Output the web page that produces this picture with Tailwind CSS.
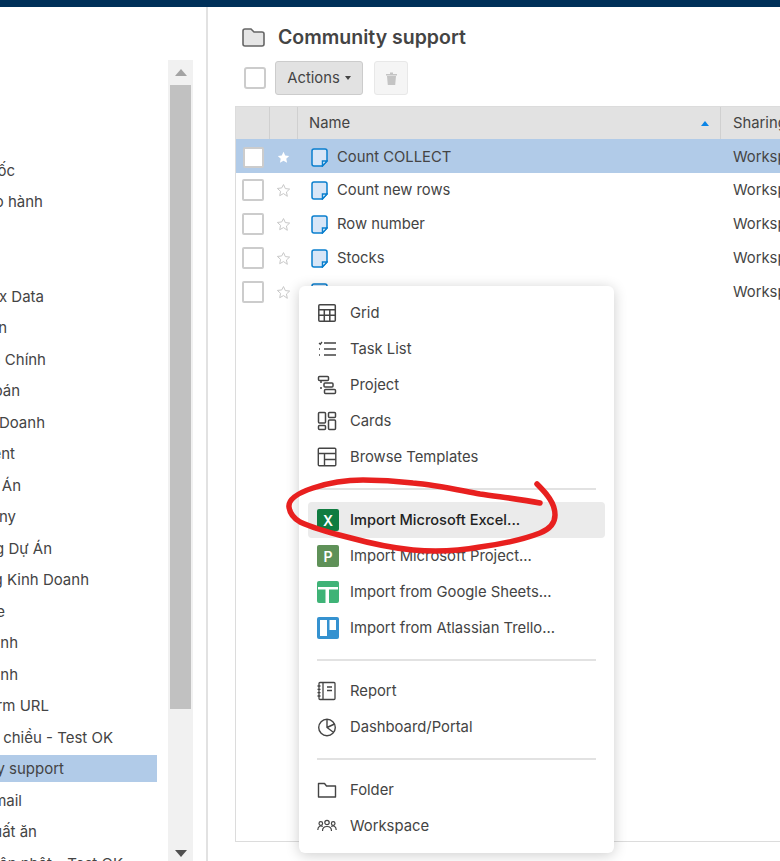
<!DOCTYPE html>
<html lang="en">
<head>
<meta charset="UTF-8">
<title>Community support</title>
<script src="https://cdn.jsdelivr.net/npm/@tailwindcss/browser@4"></script>
</head>
<body class="bg-white overflow-hidden font-['Inter',sans-serif] text-[14.8px] leading-[23px] text-[#444]">
<div class="relative w-[780px] h-[861px] overflow-hidden">
  <div class="h-[7px] bg-[#003059]"></div>
  <div class="flex h-[854px]">
    <!-- sidebar: names are cut off by the left edge, so each row is end-aligned -->
    <div class="w-[208px] shrink-0 border-r-2 border-[#e2e2e2] flex pt-[53px]">
      <div class="w-[157px] shrink-0 pt-[94.5px] overflow-hidden text-[15px]">
        <div class="h-[31.5px] flex items-center justify-end whitespace-nowrap w-[15px]">ốc</div>
        <div class="h-[31.5px] flex items-center justify-end whitespace-nowrap w-[43px]">o hành</div>
        <div class="h-[31.5px]"></div>
        <div class="h-[31.5px]"></div>
        <div class="h-[31.5px] flex items-center justify-end whitespace-nowrap w-[44px]">x Data</div>
        <div class="h-[31.5px] flex items-center justify-end whitespace-nowrap w-[7px]">n</div>
        <div class="h-[31.5px] flex items-center justify-end whitespace-nowrap w-[46px]">n Chính</div>
        <div class="h-[31.5px] flex items-center justify-end whitespace-nowrap w-[20px]">bán</div>
        <div class="h-[31.5px] flex items-center justify-end whitespace-nowrap w-[45px]">Doanh</div>
        <div class="h-[31.5px] flex items-center justify-end whitespace-nowrap w-[15px]">ent</div>
        <div class="h-[31.5px] flex items-center justify-end whitespace-nowrap w-[21px]">Án</div>
        <div class="h-[31.5px] flex items-center justify-end whitespace-nowrap w-[16px]">ny</div>
        <div class="h-[31.5px] flex items-center justify-end whitespace-nowrap w-[52px]">g Dự Án</div>
        <div class="h-[31.5px] flex items-center justify-end whitespace-nowrap w-[89px]">g Kinh Doanh</div>
        <div class="h-[31.5px] flex items-center justify-end whitespace-nowrap w-[5px]">e</div>
        <div class="h-[31.5px] flex items-center justify-end whitespace-nowrap w-[18px]">anh</div>
        <div class="h-[31.5px] flex items-center justify-end whitespace-nowrap w-[18px]">nh</div>
        <div class="h-[31.5px] flex items-center justify-end whitespace-nowrap w-[49px]">rm URL</div>
        <div class="h-[31.5px] flex items-center justify-end whitespace-nowrap w-[113px]">t chiều - Test OK</div>
        <div class="h-[31.5px] flex items-center"><div class="w-full h-[27px] flex items-center bg-[#b1cbe8]"><div class="w-[64px] flex justify-end whitespace-nowrap">y support</div></div></div>
        <div class="h-[31.5px] flex items-center justify-end whitespace-nowrap w-[22px]">mail</div>
        <div class="h-[31.5px] flex items-center justify-end whitespace-nowrap w-[37px]">uất ăn</div>
        <div class="h-[31.5px] flex items-center justify-end whitespace-nowrap w-[123px]">ận nhật - Test OK</div>
      </div>
      <!-- scrollbar -->
      <div class="ml-[11px] w-[25px] bg-[#f1f1f1] flex flex-col items-center">
        <div class="h-[25px] w-full flex items-center justify-center">
          <svg width="12" height="7" viewBox="0 0 12 7"><path d="M6 0 12 7H0z" fill="#a3a3a3"/></svg>
        </div>
        <div class="w-[21px] h-[624px] bg-[#c1c1c1]"></div>
        <div class="mt-[138px] h-[12px] w-full flex items-center justify-center">
          <svg width="12" height="7" viewBox="0 0 12 7"><path d="M0 0H12L6 7z" fill="#505050"/></svg>
        </div>
      </div>
    </div>
    <!-- main -->
    <div class="flex-1 min-w-0 pl-[27px]">
      <div class="flex items-center h-[47px] pl-[7px] gap-[13px] pt-[14px]">
        <svg width="23" height="19" viewBox="0 0 23 19"><path d="M1 3q0-2 2-2h6l3 3h8q2 0 2 2v10q0 2-2 2H3q-2 0-2-2z" fill="#e6e6e6" stroke="#666" stroke-width="1.6"/></svg>
        <h1 class="text-[19.5px] font-semibold text-[#444]">Community support</h1>
      </div>
      <div class="flex items-center h-[34px] mt-[7px]">
        <div class="ml-[9px] w-[22px] h-[22px] border-2 border-[#ccc] rounded-[3px] bg-white"></div>
        <div class="ml-[9px] w-[88px] h-[34px] bg-[#e2e2e2] border border-[#ccc] rounded-[3px] flex items-center justify-center gap-[5px]">
          <span>Actions</span>
          <svg width="6" height="4" viewBox="0 0 6 4"><path d="M0 0H6L3 4z" fill="#444"/></svg>
        </div>
        <div class="ml-[11px] w-[34px] h-[34px] bg-[#f5f5f5] border border-[#e8e8e8] rounded-[3px] flex items-center justify-center">
          <svg width="11" height="13" viewBox="0 0 11 13"><path d="M0 2h11v1.500H0zM4 .5h3V2H4zM1 4h9l-.8 9H1.800z" fill="#c4c4c4"/></svg>
        </div>
      </div>
      <!-- table -->
      <div class="mt-[11px] h-[736px] border border-[#dcdcdc] border-r-0 overflow-hidden">
        <div class="flex h-[33px] bg-[#e2e2e2] border-b border-[#d4d4d4]">
          <div class="w-[34px] shrink-0 border-r border-[#d0d0d0]"></div>
          <div class="w-[28px] shrink-0 border-r border-[#d0d0d0]"></div>
          <div class="w-[423px] shrink-0 border-r border-[#d0d0d0] pl-[11px] pr-[11px] flex items-center justify-between">
            <span>Name</span>
            <svg width="8" height="5" viewBox="0 0 8 5"><path d="M4 0 8 5H0z" fill="#0a84e6"/></svg>
          </div>
          <div class="pl-[12px] flex items-center whitespace-nowrap">Sharing</div>
        </div>
        <!-- selected row -->
        <div class="flex h-[34px] -mt-[1px] pt-[2px] items-center bg-[#b1cbe8]">
          <div class="w-[34px] shrink-0 flex justify-center"><div class="w-[21px] h-[21px] border-2 border-[#ccc] rounded-[2px] bg-white"></div></div>
          <div class="w-[28px] shrink-0 flex justify-center pr-[2px]"><svg width="13" height="13" viewBox="0 0 24 24"><path d="M12 1.500l3.200 7 7.300.8-5.400 5 1.500 7.500L12 18l-6.600 3.800 1.500-7.500-5.400-5 7.300-.8z" fill="#fff"/></svg></div>
          <div class="w-[423px] shrink-0 pl-[13px] flex items-center gap-[9px]">
            <svg class="shrink-0" width="17" height="19" viewBox="0 0 17 19"><path d="M3 1h11q2 0 2 2v10l-5 5H3q-2 0-2-2V3q0-2 2-2z" fill="#d8e6f7" stroke="#0a7fce" stroke-width="1.500"/><path d="M16 13h-4.500v5z" fill="#fff" stroke="#0a7fce" stroke-width="1.500"/></svg>
            <span>Count COLLECT</span>
          </div>
          <div class="pl-[12px] whitespace-nowrap">Workspace</div>
        </div>
        <div class="flex h-[34px] items-center">
          <div class="w-[34px] shrink-0 flex justify-center"><div class="w-[22px] h-[22px] border-2 border-[#ccc] rounded-[2px] bg-white"></div></div>
          <div class="w-[28px] shrink-0 flex justify-center pr-[2px]"><svg width="15" height="15" viewBox="0 0 24 24"><path d="M12 2.500l2.900 6.400 6.900.8-5.100 4.700 1.400 6.900L12 16.900l-6.100 3.400 1.400-6.900-5.100-4.700 6.900-.8z" fill="none" stroke="#c8c8c8" stroke-width="1.600"/></svg></div>
          <div class="w-[423px] shrink-0 pl-[13px] flex items-center gap-[9px]">
            <svg class="shrink-0" width="17" height="19" viewBox="0 0 17 19"><path d="M3 1h11q2 0 2 2v10l-5 5H3q-2 0-2-2V3q0-2 2-2z" fill="#d8e6f7" stroke="#0a7fce" stroke-width="1.500"/><path d="M16 13h-4.500v5z" fill="#fff" stroke="#0a7fce" stroke-width="1.500"/></svg>
            <span>Count new rows</span>
          </div>
          <div class="pl-[12px] whitespace-nowrap">Workspace</div>
        </div>
        <div class="flex h-[34px] items-center">
          <div class="w-[34px] shrink-0 flex justify-center"><div class="w-[22px] h-[22px] border-2 border-[#ccc] rounded-[2px] bg-white"></div></div>
          <div class="w-[28px] shrink-0 flex justify-center pr-[2px]"><svg width="15" height="15" viewBox="0 0 24 24"><path d="M12 2.500l2.900 6.400 6.900.8-5.100 4.700 1.400 6.900L12 16.900l-6.100 3.400 1.400-6.900-5.100-4.700 6.900-.8z" fill="none" stroke="#c8c8c8" stroke-width="1.600"/></svg></div>
          <div class="w-[423px] shrink-0 pl-[13px] flex items-center gap-[9px]">
            <svg class="shrink-0" width="17" height="19" viewBox="0 0 17 19"><path d="M3 1h11q2 0 2 2v10l-5 5H3q-2 0-2-2V3q0-2 2-2z" fill="#d8e6f7" stroke="#0a7fce" stroke-width="1.500"/><path d="M16 13h-4.500v5z" fill="#fff" stroke="#0a7fce" stroke-width="1.500"/></svg>
            <span>Row number</span>
          </div>
          <div class="pl-[12px] whitespace-nowrap">Workspace</div>
        </div>
        <div class="flex h-[34px] items-center">
          <div class="w-[34px] shrink-0 flex justify-center"><div class="w-[22px] h-[22px] border-2 border-[#ccc] rounded-[2px] bg-white"></div></div>
          <div class="w-[28px] shrink-0 flex justify-center pr-[2px]"><svg width="15" height="15" viewBox="0 0 24 24"><path d="M12 2.500l2.900 6.400 6.900.8-5.100 4.700 1.400 6.900L12 16.900l-6.100 3.400 1.400-6.900-5.100-4.700 6.900-.8z" fill="none" stroke="#c8c8c8" stroke-width="1.600"/></svg></div>
          <div class="w-[423px] shrink-0 pl-[13px] flex items-center gap-[9px]">
            <svg class="shrink-0" width="17" height="19" viewBox="0 0 17 19"><path d="M3 1h11q2 0 2 2v10l-5 5H3q-2 0-2-2V3q0-2 2-2z" fill="#d8e6f7" stroke="#0a7fce" stroke-width="1.500"/><path d="M16 13h-4.500v5z" fill="#fff" stroke="#0a7fce" stroke-width="1.500"/></svg>
            <span>Stocks</span>
          </div>
          <div class="pl-[12px] whitespace-nowrap">Workspace</div>
        </div>
        <div class="flex h-[34px] items-center">
          <div class="w-[34px] shrink-0 flex justify-center"><div class="w-[22px] h-[22px] border-2 border-[#ccc] rounded-[2px] bg-white"></div></div>
          <div class="w-[28px] shrink-0 flex justify-center pr-[2px]"><svg width="15" height="15" viewBox="0 0 24 24"><path d="M12 2.500l2.900 6.400 6.900.8-5.100 4.700 1.400 6.900L12 16.900l-6.100 3.400 1.400-6.900-5.100-4.700 6.900-.8z" fill="none" stroke="#c8c8c8" stroke-width="1.600"/></svg></div>
          <div class="w-[423px] shrink-0 pl-[13px] flex items-center gap-[9px]">
            <svg class="shrink-0" width="17" height="19" viewBox="0 0 17 19"><path d="M3 1h11q2 0 2 2v10l-5 5H3q-2 0-2-2V3q0-2 2-2z" fill="#d8e6f7" stroke="#0a7fce" stroke-width="1.500"/></svg>
          </div>
          <div class="pl-[12px] whitespace-nowrap">Workspace</div>
        </div>
      </div>
    </div>
  </div>

  <!-- new item menu -->
  <div class="absolute left-[299px] top-[286px] w-[315px] h-[567px] bg-white rounded-[6px] shadow-[0_2px_14px_rgba(0,0,0,0.2)] pt-[9px] px-[9px]">
    <div class="h-9 flex items-center pl-[9px] gap-[13px]"><svg width="20" height="20" viewBox="0 0 20 20" fill="none" stroke="#444" stroke-width="1.500"><rect x="1.800" y="1.800" width="16.500" height="16.500" rx="1"/><path d="M1.800 6.800h16.500M1.800 12.300h16.500M7.300 6.800v11.500M12.800 6.800v11.500"/></svg><span>Grid</span></div>
    <div class="h-9 flex items-center pl-[9px] gap-[13px]"><svg width="20" height="20" viewBox="0 0 20 20" fill="none" stroke="#444" stroke-width="1.300"><path d="M7 4h12M7 10h12M7 16h12"/><path d="m2 4 1.300 1.200L5 3M2 10h1M2 16h1"/></svg><span>Task List</span></div>
    <div class="h-9 flex items-center pl-[9px] gap-[13px]"><svg width="20" height="20" viewBox="0 0 20 20" fill="none" stroke="#444" stroke-width="1.500"><rect x="1.500" y="1.500" width="10" height="4" rx="1"/><rect x="7" y="8" width="9" height="4" rx="1"/><rect x="7.500" y="14.500" width="11" height="4" rx="1"/><path d="M4 5.500V8M4 12V14"/></svg><span>Project</span></div>
    <div class="h-9 flex items-center pl-[9px] gap-[13px]"><svg width="20" height="20" viewBox="0 0 20 20" fill="none" stroke="#444" stroke-width="1.500"><rect x="1.500" y="1.500" width="7" height="10.500" rx="1"/><rect x="11.500" y="1.500" width="7" height="5" rx="1"/><rect x="1.500" y="14.500" width="7" height="4" rx="1"/><rect x="11.500" y="9" width="7" height="9.500" rx="1"/></svg><span>Cards</span></div>
    <div class="h-9 flex items-center pl-[9px] gap-[13px]"><svg width="20" height="20" viewBox="0 0 20 20" fill="none" stroke="#444" stroke-width="1.400"><rect x="1.300" y="1.300" width="17.500" height="17.500" rx="1"/><path d="M1.300 6.500h17.500M7.500 6.500v12.300M7.500 12.500h11.300"/></svg><span>Browse Templates</span></div>
    <div class="h-[2px] mt-[13px] mx-[9px] bg-[#e2e2e2]"></div>
    <div class="mt-[12px] h-9 flex items-center pl-[9px] gap-[11px] bg-[#ebebeb] rounded-[4px] text-[#222] text-[14.6px] font-medium">
      <div class="w-[22px] h-[22px] rounded-[2px] bg-[#107c41] flex items-center justify-center text-white text-[14px] font-semibold">X</div><span>Import Microsoft Excel...</span>
    </div>
    <div class="h-9 flex items-center pl-[9px] gap-[11px]">
      <div class="w-[22px] h-[22px] rounded-[2px] bg-[#5f9158] flex items-center justify-center text-white text-[14px] font-semibold">P</div><span>Import Microsoft Project...</span>
    </div>
    <div class="h-9 flex items-center pl-[9px] gap-[11px]">
      <svg width="22" height="22" viewBox="0 0 22 22"><rect width="22" height="22" rx="2" fill="#3fb377"/><path d="M1 6h20v2.500h-9V22H8.500V8.500H1z" fill="#fff"/></svg><span>Import from Google Sheets...</span>
    </div>
    <div class="h-9 flex items-center pl-[9px] gap-[11px]">
      <svg width="22" height="22" viewBox="0 0 22 22"><rect width="22" height="22" rx="2" fill="#3592d0"/><rect x="3" y="3" width="7" height="16" fill="#fff"/><rect x="12.500" y="3" width="6.500" height="10" fill="#fff"/></svg><span>Import from Atlassian Trello...</span>
    </div>
    <div class="h-[2px] mt-[13px] mx-[9px] bg-[#e2e2e2]"></div>
    <div class="mt-[12px] h-9 flex items-center pl-[9px] gap-[13px]"><svg width="20" height="20" viewBox="0 0 20 20" fill="none" stroke="#444" stroke-width="1.300"><rect x="2" y="1.500" width="16" height="17" rx="1"/><path d="M6 1.500v17M.5 5h3M.5 8.300h3M.5 11.600h3M.5 15h3M10 6h5M10 9.500h5"/></svg><span>Report</span></div>
    <div class="h-9 flex items-center pl-[9px] gap-[13px]"><svg width="20" height="20" viewBox="0 0 20 20" fill="none" stroke="#444" stroke-width="1.400"><circle cx="10" cy="10.500" r="8.300"/><path d="M10 2.200V10.500L16 15M10 10.500 17.500 7"/></svg><span>Dashboard/Portal</span></div>
    <div class="h-[2px] mt-[13px] mx-[9px] bg-[#e2e2e2]"></div>
    <div class="mt-[12px] h-9 flex items-center pl-[9px] gap-[13px]"><svg width="20" height="20" viewBox="0 0 20 20" fill="none" stroke="#444" stroke-width="1.400"><path d="M1.500 3.500h6l2 2.500h9v11h-17z" stroke-linejoin="round"/></svg><span>Folder</span></div>
    <div class="h-9 flex items-center pl-[9px] gap-[13px]"><svg width="20" height="20" viewBox="0 0 20 20" fill="none" stroke="#444" stroke-width="1.200"><circle cx="10" cy="6.500" r="2.200"/><circle cx="3.800" cy="7.500" r="1.800"/><circle cx="16.200" cy="7.500" r="1.800"/><path d="M5.500 15c0-6 9-6 9 0M.8 14c0-4 3-5 5-3.500M19.200 14c0-4-3-5-5-3.500"/></svg><span>Workspace</span></div>
  </div>

  <!-- red hand-drawn circle -->
  <svg class="absolute left-0 top-0 pointer-events-none" width="780" height="861" viewBox="0 0 780 861" fill="none">
    <path d="M540 503C520 499 500 497 480 494C458 490 436 485 413 483C396 481 380 480 363 480C345 480 328 483 313 488C298 493 288 499 289 507C290 515 295 519 300 522C315 529 331 533 347 537C369 543 391 548 413 550C436 552 458 551 480 547C502 544 522 540 540 533C550 529 555 523 555 515C555 507 551 500 547 495C544 491 540 487 537 484" stroke="#e8201f" stroke-width="5.500" stroke-linecap="round" stroke-linejoin="round"/>
  </svg>
</div>
</body>
</html>
